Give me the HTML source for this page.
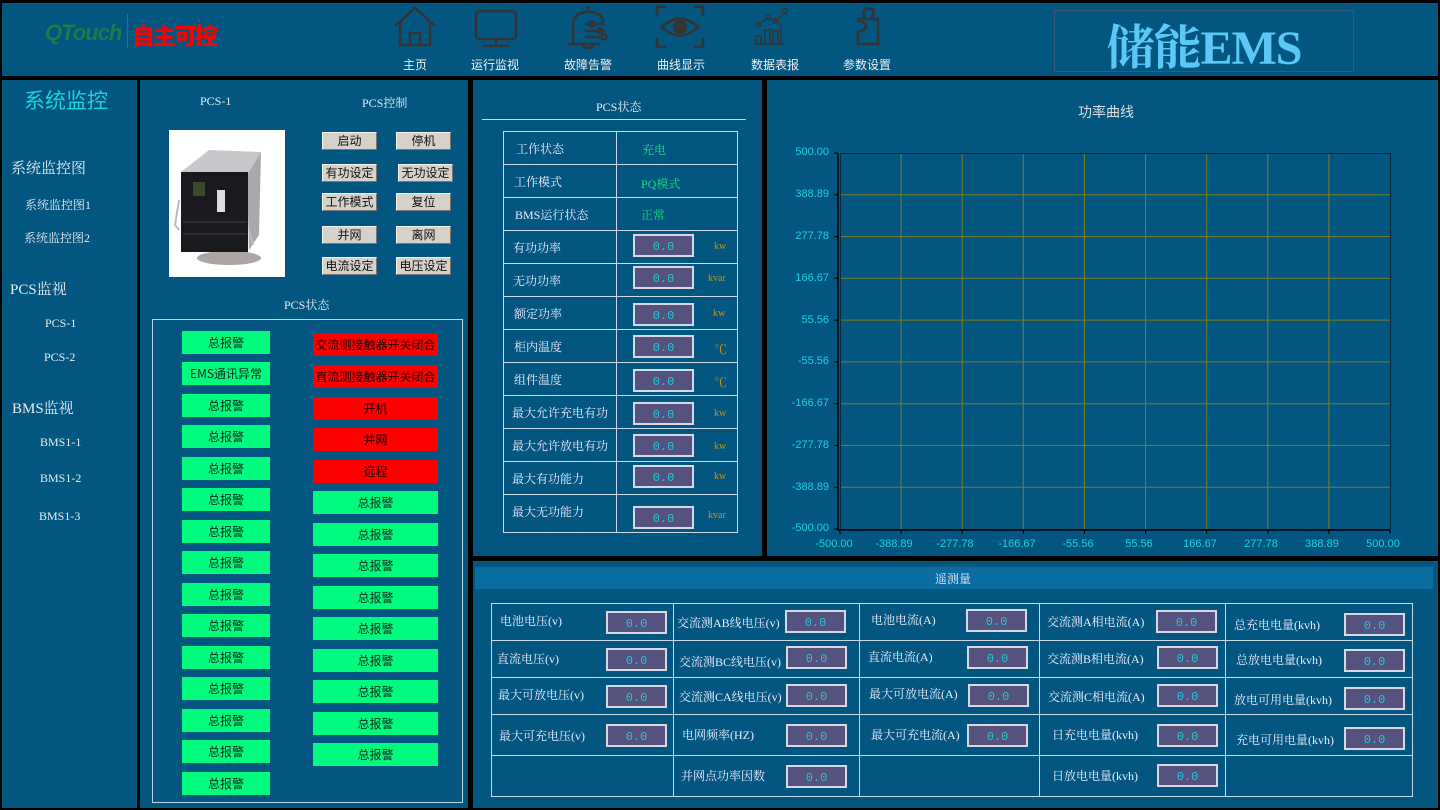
<!DOCTYPE html>
<html><head><meta charset="utf-8"><style>
*{margin:0;padding:0;box-sizing:border-box}
body{width:1440px;height:810px;background:#000;position:relative;overflow:hidden;font-family:"Liberation Serif","Noto Serif CJK SC","Noto Sans CJK SC",serif;color:#e8eef2}
.p{position:absolute;background:#02567f}
.a{position:absolute;white-space:nowrap}
.nav{position:absolute;top:56px;font-size:12px;color:#f2f2f2;font-family:"Liberation Sans","Noto Sans CJK SC",sans-serif;text-align:center;width:80px}
.btn{position:absolute;width:55px;height:18px;background:#d6d2ca;border:1px solid #f4f4f4;border-right-color:#777;border-bottom-color:#777;color:#111;font-size:12px;text-align:center;line-height:16px;font-family:"Noto Sans CJK SC",sans-serif}
.g{position:absolute;background:#00fb7f;color:#0b2a1a;font-size:12px;text-align:center;line-height:23px;height:23px;font-family:"Noto Sans CJK SC",sans-serif}
.r{position:absolute;background:#fd0000;color:#200;font-size:12px;text-align:center;line-height:23px;height:23px;font-family:"Noto Sans CJK SC",sans-serif}
.v{position:absolute;width:61px;height:23px;background:#55527e;border:2px solid #d8d8e4;color:#22c8d8;font-size:12px;display:flex;align-items:center;justify-content:center;font-family:"Liberation Mono",monospace;padding-top:2px}
.lb{position:absolute;font-size:12px;color:#eef;white-space:nowrap}
.u{position:absolute;font-size:10px;color:#c8960f}
.gr{position:absolute;font-size:12px;color:#12e07a}
.yl{position:absolute;font-size:11px;color:#1ed0e0;font-family:"Liberation Sans",sans-serif;text-align:right;width:50px}
.xl{position:absolute;font-size:11px;color:#1ed0e0;font-family:"Liberation Sans",sans-serif;width:60px;text-align:center;top:538px}
</style></head><body>
<!-- header -->
<div class="p" style="left:2px;top:3px;width:1436px;height:73px"></div>
<div class="a" style="left:45px;top:20px;font:italic bold 22px 'Liberation Sans',sans-serif;color:#1f7a4e;letter-spacing:-1px">QTouch</div>
<div class="a" style="left:127px;top:14px;width:1px;height:34px;background:#2a7a5a"></div>
<div class="a" style="left:132px;top:17px;font:900 23px 'Noto Sans CJK SC',sans-serif;color:#f00;letter-spacing:-2px">自主可控</div>
<svg class="a" style="left:380px;top:0" width="520" height="52" fill="none" stroke="#333" stroke-width="2.5">
<path d="M15 26 L35 8 L55 26 M20 22 V45 H50 V22 M30 45 V33 H40 V45"/>
<rect x="96" y="11" width="40" height="28" rx="4"/><path d="M116 39 V46 M103 46 H129"/>
<path d="M193 44 V26 Q193 12 208 12 Q223 12 223 22 M208 12 V6 M188 44 H220 M201 44 Q208 52 215 44"/><path d="M205 24 H225 M205 31 H225 M205 37 H220"/><circle cx="212" cy="24" r="2.5"/><circle cx="220" cy="31" r="2.5"/><circle cx="224" cy="37" r="2.5"/>
<path d="M277 16 V7 H286 M314 7 H323 V16 M323 38 V47 H314 M286 47 H277 V38"/><path d="M282 27 Q300 10 318 27 Q300 44 282 27Z"/><circle cx="300" cy="27" r="6" fill="#333"/>
<path d="M374 44 H405 M376 44 V36 H381 V44 M385 44 V30 H390 V44 M393 44 V31 H398 V44 M401 44 V23" stroke-width="1.5"/><path d="M378 25 L387 18 L396 21 L405 12" stroke-width="1.3"/><circle cx="378" cy="25" r="2.5" stroke-width="1.3"/><circle cx="388" cy="17" r="2.5" stroke-width="1.3"/><circle cx="396" cy="21" r="2.5" stroke-width="1.3"/><circle cx="405" cy="11" r="2.5" stroke-width="1.3"/>
<path d="M478 44 V32 Q486 30 486 26 Q486 22 478 21 V19 H486 Q481 12 486 9 Q492 7 494 12 Q493 17 490 19 H498 V44 Z"/>
</svg>
<div class="nav" style="left:375px">主页</div>
<div class="nav" style="left:455px">运行监视</div>
<div class="nav" style="left:548px">故障告警</div>
<div class="nav" style="left:641px">曲线显示</div>
<div class="nav" style="left:735px">数据表报</div>
<div class="nav" style="left:827px">参数设置</div>
<div class="a" style="left:1054px;top:10px;width:300px;height:62px;border:1px solid #3a5a76"></div>
<div class="a" style="left:1054px;top:9px;width:300px;text-align:center;font:bold 48px 'Liberation Serif','Noto Serif CJK SC',serif;color:#5cc8f8;letter-spacing:-1px">储能EMS</div>

<!-- sidebar -->
<div class="p" style="left:2px;top:80px;width:135px;height:728px"></div>
<div class="a" style="left:24px;top:85px;font-size:21px;color:#17d4e0;font-family:'Noto Sans CJK SC',sans-serif">系统监控</div>
<div class="a" style="left:11px;top:157px;font-size:15px">系统监控图</div>
<div class="a" style="left:25px;top:196px;font-size:12px">系统监控图1</div>
<div class="a" style="left:24px;top:229px;font-size:12px">系统监控图2</div>
<div class="a" style="left:10px;top:278px;font-size:15px">PCS监视</div>
<div class="a" style="left:45px;top:316px;font-size:12px">PCS-1</div>
<div class="a" style="left:44px;top:350px;font-size:12px">PCS-2</div>
<div class="a" style="left:12px;top:397px;font-size:15px">BMS监视</div>
<div class="a" style="left:40px;top:435px;font-size:12px">BMS1-1</div>
<div class="a" style="left:40px;top:471px;font-size:12px">BMS1-2</div>
<div class="a" style="left:39px;top:509px;font-size:12px">BMS1-3</div>

<!-- PCS panel -->
<div class="p" style="left:140px;top:80px;width:328px;height:728px"></div>
<div class="a" style="left:200px;top:94px;font-size:12px">PCS-1</div>
<div class="a" style="left:362px;top:94px;font-size:12px">PCS控制</div>
<div class="a" style="left:169px;top:130px;width:116px;height:147px;background:#fff"></div>
<svg class="a" style="left:169px;top:130px" width="116" height="147">
<ellipse cx="60" cy="128" rx="32" ry="7" fill="#6a5a5a" opacity=".55"/>
<path d="M12 42 L40 20 L92 22 L78 45 Z" fill="#c8c8cc"/>
<path d="M78 45 L92 22 L90 105 L80 120 Z" fill="#a8a8ae"/>
<rect x="12" y="42" width="67" height="80" fill="#1a1a1e"/>
<rect x="24" y="52" width="12" height="14" fill="#3a4a2a"/><rect x="48" y="60" width="8" height="22" fill="#ddd"/>
<path d="M14 92 H78 M14 104 H78" stroke="#444"/>
<path d="M10 70 L6 95 L10 100" stroke="#bbb" stroke-width="2" fill="none"/><path d="M80 100 L84 115" stroke="#bbb" stroke-width="2"/>
</svg>
<div class="btn" style="left:322px;top:132px">启动</div><div class="btn" style="left:396px;top:132px">停机</div>
<div class="btn" style="left:322px;top:164px">有功设定</div><div class="btn" style="left:398px;top:164px">无功设定</div>
<div class="btn" style="left:322px;top:193px">工作模式</div><div class="btn" style="left:396px;top:193px">复位</div>
<div class="btn" style="left:322px;top:226px">并网</div><div class="btn" style="left:396px;top:226px">离网</div>
<div class="btn" style="left:322px;top:257px">电流设定</div><div class="btn" style="left:396px;top:257px">电压设定</div>
<div class="a" style="left:284px;top:296px;font-size:12px">PCS状态</div>
<div class="a" style="left:152px;top:319px;width:311px;height:484px;border:1px solid #b8d4e4"></div>
<div class="g" style="left:182px;top:331px;width:88px">总报警</div>
<div class="g" style="left:182px;top:362px;width:88px">EMS通讯异常</div>
<div class="g" style="left:182px;top:394px;width:88px">总报警</div>
<div class="g" style="left:182px;top:425px;width:88px">总报警</div>
<div class="g" style="left:182px;top:457px;width:88px">总报警</div>
<div class="g" style="left:182px;top:488px;width:88px">总报警</div>
<div class="g" style="left:182px;top:520px;width:88px">总报警</div>
<div class="g" style="left:182px;top:551px;width:88px">总报警</div>
<div class="g" style="left:182px;top:583px;width:88px">总报警</div>
<div class="g" style="left:182px;top:614px;width:88px">总报警</div>
<div class="g" style="left:182px;top:646px;width:88px">总报警</div>
<div class="g" style="left:182px;top:677px;width:88px">总报警</div>
<div class="g" style="left:182px;top:709px;width:88px">总报警</div>
<div class="g" style="left:182px;top:740px;width:88px">总报警</div>
<div class="g" style="left:182px;top:772px;width:88px">总报警</div>
<div class="r" style="left:313px;top:333px;width:125px">交流侧接触器开关闭合</div>
<div class="r" style="left:313px;top:365px;width:125px">直流测接触器开关闭合</div>
<div class="r" style="left:313px;top:397px;width:125px">开机</div>
<div class="r" style="left:313px;top:428px;width:125px">并网</div>
<div class="r" style="left:313px;top:460px;width:125px">远程</div>
<div class="g" style="left:313px;top:491px;width:125px">总报警</div>
<div class="g" style="left:313px;top:523px;width:125px">总报警</div>
<div class="g" style="left:313px;top:554px;width:125px">总报警</div>
<div class="g" style="left:313px;top:586px;width:125px">总报警</div>
<div class="g" style="left:313px;top:617px;width:125px">总报警</div>
<div class="g" style="left:313px;top:649px;width:125px">总报警</div>
<div class="g" style="left:313px;top:680px;width:125px">总报警</div>
<div class="g" style="left:313px;top:712px;width:125px">总报警</div>
<div class="g" style="left:313px;top:743px;width:125px">总报警</div>

<!-- PCS status table -->
<div class="p" style="left:473px;top:80px;width:289px;height:476px"></div>
<div class="a" style="left:596px;top:98px;font-size:12px">PCS状态</div>
<div class="a" style="left:482px;top:119px;width:264px;height:1px;background:#c8dce8"></div>
<svg class="a" style="left:0;top:0" width="770" height="560" stroke="#c8dce8" stroke-width="1" fill="none">
<rect x="503.5" y="131.5" width="234" height="401"/><path d="M616.5 131 V533"/>
<path d="M503 164.5H738 M503 197.5H738 M503 230.5H738 M503 263.5H738 M503 296.5H738 M503 329.5H738 M503 362.5H738 M503 395.5H738 M503 428.5H738 M503 461.5H738 M503 494.5H738"/>
</svg>
<div class="lb" style="left:516px;top:140px">工作状态</div><div class="gr" style="left:642px;top:141px">充电</div>
<div class="lb" style="left:514px;top:173px">工作模式</div><div class="gr" style="left:641px;top:175px">PQ模式</div>
<div class="lb" style="left:515px;top:206px">BMS运行状态</div><div class="gr" style="left:641px;top:206px">正常</div>
<div class="lb" style="left:513px;top:239px">有功功率</div><div class="v" style="left:633px;top:234px">0.0</div><div class="u" style="left:714px;top:241px">kw</div>
<div class="lb" style="left:513px;top:272px">无功功率</div><div class="v" style="left:633px;top:266px">0.0</div><div class="u" style="left:708px;top:273px">kvar</div>
<div class="lb" style="left:514px;top:305px">额定功率</div><div class="v" style="left:633px;top:303px">0.0</div><div class="u" style="left:713px;top:308px">kw</div>
<div class="lb" style="left:514px;top:338px">柜内温度</div><div class="v" style="left:633px;top:335px">0.0</div><div class="u" style="left:714px;top:339px;font-size:13px">℃</div>
<div class="lb" style="left:514px;top:371px">组件温度</div><div class="v" style="left:633px;top:369px">0.0</div><div class="u" style="left:714px;top:372px;font-size:13px">℃</div>
<div class="lb" style="left:512px;top:404px">最大允许充电有功</div><div class="v" style="left:633px;top:402px">0.0</div><div class="u" style="left:714px;top:408px">kw</div>
<div class="lb" style="left:512px;top:437px">最大允许放电有功</div><div class="v" style="left:633px;top:434px">0.0</div><div class="u" style="left:714px;top:441px">kw</div>
<div class="lb" style="left:512px;top:470px">最大有功能力</div><div class="v" style="left:633px;top:465px">0.0</div><div class="u" style="left:714px;top:471px">kw</div>
<div class="lb" style="left:512px;top:503px">最大无功能力</div><div class="v" style="left:633px;top:506px">0.0</div><div class="u" style="left:708px;top:510px">kvar</div>

<!-- chart -->
<div class="p" style="left:767px;top:80px;width:671px;height:476px"></div>
<div class="a" style="left:1078px;top:102px;font-size:14px;color:#ddd;font-family:'Noto Sans CJK SC',sans-serif">功率曲线</div>
<svg class="a" style="left:0;top:0" width="1440" height="560">
<g stroke="#7e7e22" stroke-width="1">
<path d="M840 194.8H1390 M840 236.6H1390 M840 278.3H1390 M840 320.1H1390 M840 361.9H1390 M840 403.7H1390 M840 445.4H1390 M840 487.2H1390"/>
<path d="M901.1 153V529 M962.2 153V529 M1023.3 153V529 M1084.4 153V529 M1145.6 153V529 M1206.7 153V529 M1267.8 153V529 M1328.9 153V529"/>
</g>
<rect x="840.5" y="153.5" width="550" height="376" fill="none" stroke="#0a2a3e"/>
<path d="M838 153V530 H1390" stroke="#000" stroke-width="1.5" fill="none"/>
<g stroke="#000" stroke-width="1">
<path d="M834 153H838 M834 194.8H838 M834 236.6H838 M834 278.3H838 M834 320.1H838 M834 361.9H838 M834 403.7H838 M834 445.4H838 M834 487.2H838 M834 529H838"/>
<path d="M840 530V534 M901.1 530V534 M962.2 530V534 M1023.3 530V534 M1084.4 530V534 M1145.6 530V534 M1206.7 530V534 M1267.8 530V534 M1328.9 530V534 M1390 530V534"/>
</g>
</svg>
<div class="yl" style="left:779px;top:146px">500.00</div>
<div class="yl" style="left:779px;top:188px">388.89</div>
<div class="yl" style="left:779px;top:230px">277.78</div>
<div class="yl" style="left:779px;top:272px">166.67</div>
<div class="yl" style="left:779px;top:314px">55.56</div>
<div class="yl" style="left:779px;top:355px">-55.56</div>
<div class="yl" style="left:779px;top:397px">-166.67</div>
<div class="yl" style="left:779px;top:439px">-277.78</div>
<div class="yl" style="left:779px;top:481px">-388.89</div>
<div class="yl" style="left:779px;top:522px">-500.00</div>
<div class="xl" style="left:804px">-500.00</div>
<div class="xl" style="left:864px">-388.89</div>
<div class="xl" style="left:925px">-277.78</div>
<div class="xl" style="left:987px">-166.67</div>
<div class="xl" style="left:1048px">-55.56</div>
<div class="xl" style="left:1109px">55.56</div>
<div class="xl" style="left:1170px">166.67</div>
<div class="xl" style="left:1231px">277.78</div>
<div class="xl" style="left:1292px">388.89</div>
<div class="xl" style="left:1353px">500.00</div>

<!-- bottom -->
<div class="p" style="left:473px;top:561px;width:965px;height:247px"></div>
<div class="a" style="left:475px;top:567px;width:958px;height:22px;background:#0a6da2"></div>
<div class="a" style="left:935px;top:570px;font-size:12px">遥测量</div>
<svg class="a" style="left:0;top:0" width="1440" height="810" stroke="#c8dce8" fill="none">
<rect x="491.5" y="603.5" width="921" height="193"/>
<path d="M673.5 603V797 M859.5 603V797 M1039.5 603V797 M1225.5 603V797"/>
<path d="M491 640.5H1413 M491 677.5H1413 M491 714.5H1413 M491 755.5H1413"/>
</svg>
<div class="lb" style="left:500px;top:612px">电池电压(v)</div><div class="v" style="left:606px;top:611px">0.0</div>
<div class="lb" style="left:497px;top:650px">直流电压(v)</div><div class="v" style="left:606px;top:648px">0.0</div>
<div class="lb" style="left:498px;top:686px">最大可放电压(v)</div><div class="v" style="left:606px;top:685px">0.0</div>
<div class="lb" style="left:499px;top:727px">最大可充电压(v)</div><div class="v" style="left:606px;top:724px">0.0</div>
<div class="lb" style="left:677px;top:614px">交流测AB线电压(v)</div><div class="v" style="left:785px;top:610px">0.0</div>
<div class="lb" style="left:679px;top:653px">交流测BC线电压(v)</div><div class="v" style="left:786px;top:646px">0.0</div>
<div class="lb" style="left:679px;top:688px">交流测CA线电压(v)</div><div class="v" style="left:786px;top:684px">0.0</div>
<div class="lb" style="left:682px;top:726px">电网频率(HZ)</div><div class="v" style="left:786px;top:724px">0.0</div>
<div class="lb" style="left:681px;top:767px">并网点功率因数</div><div class="v" style="left:786px;top:765px">0.0</div>
<div class="lb" style="left:871px;top:611px">电池电流(A)</div><div class="v" style="left:966px;top:609px">0.0</div>
<div class="lb" style="left:868px;top:648px">直流电流(A)</div><div class="v" style="left:967px;top:646px">0.0</div>
<div class="lb" style="left:869px;top:685px">最大可放电流(A)</div><div class="v" style="left:968px;top:684px">0.0</div>
<div class="lb" style="left:871px;top:726px">最大可充电流(A)</div><div class="v" style="left:967px;top:724px">0.0</div>
<div class="lb" style="left:1047px;top:613px">交流测A相电流(A)</div><div class="v" style="left:1156px;top:610px">0.0</div>
<div class="lb" style="left:1047px;top:650px">交流测B相电流(A)</div><div class="v" style="left:1157px;top:646px">0.0</div>
<div class="lb" style="left:1048px;top:688px">交流测C相电流(A)</div><div class="v" style="left:1157px;top:684px">0.0</div>
<div class="lb" style="left:1052px;top:726px">日充电电量(kvh)</div><div class="v" style="left:1157px;top:724px">0.0</div>
<div class="lb" style="left:1052px;top:767px">日放电电量(kvh)</div><div class="v" style="left:1157px;top:764px">0.0</div>
<div class="lb" style="left:1234px;top:616px">总充电电量(kvh)</div><div class="v" style="left:1344px;top:613px">0.0</div>
<div class="lb" style="left:1236px;top:651px">总放电电量(kvh)</div><div class="v" style="left:1344px;top:649px">0.0</div>
<div class="lb" style="left:1234px;top:691px">放电可用电量(kvh)</div><div class="v" style="left:1344px;top:687px">0.0</div>
<div class="lb" style="left:1236px;top:731px">充电可用电量(kvh)</div><div class="v" style="left:1344px;top:727px">0.0</div>
</body></html>
